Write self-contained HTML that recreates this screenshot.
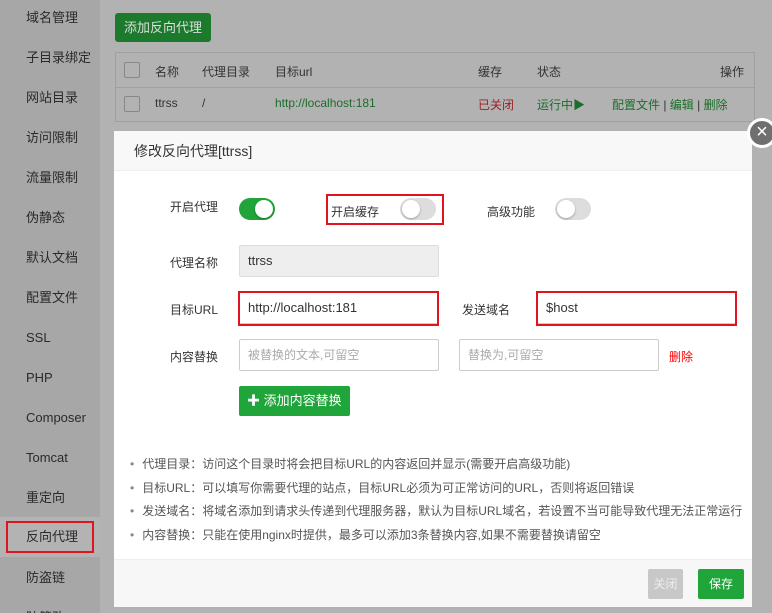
<!DOCTYPE html><html style="background:#b2b2b2"><head><meta charset="utf-8"><style>
*{box-sizing:border-box;margin:0;padding:0}
html,body{width:772px;height:613px;overflow:hidden}
body{background:#b2b2b2;font-family:"Liberation Sans","Noto Sans CJK SC",sans-serif;font-size:12px;color:#333;position:relative}
.sb{position:absolute;left:0;top:0;width:100px;height:613px;background:#a7a7a7}
.sb div{position:absolute;left:0;width:100px;height:40px;line-height:40px;padding-left:26px;font-size:13px;color:#2a2a2a}
.abs{position:absolute}
.g{color:#1b6e2a}
.modal{position:absolute;left:114px;top:131px;width:638px;height:476px;background:#fff}
.hd{height:40px;line-height:40px;padding-left:20px;font-size:14px;color:#333;border-bottom:1px solid #eee;background:#f8f8f8}
.ft{position:absolute;left:0;bottom:0;width:638px;height:48px;background:#f7f7f7;border-top:1px solid #eee}
.lbl{position:absolute;font-size:12px;color:#333}
.inp{position:absolute;height:32px;border:1px solid #ccc;border-radius:2px;line-height:30px;padding-left:8px;font-size:13px;color:#333;background:#fff}
.sw{position:absolute;width:36px;height:22px;border-radius:11px;background:#ddd}
.sw i{position:absolute;top:2px;width:18px;height:18px;border-radius:50%;background:#fff;box-shadow:0 1px 2px rgba(0,0,0,.3)}
.red{position:absolute;border:2px solid #e0141e}
.tips{position:absolute;left:16px;top:322px;color:#555;font-size:12px;line-height:23.5px}
.tips div:before{content:"•";color:#888;margin-right:8px}
</style></head><body>
<div class="sb">
<div style="top:-2px">域名管理</div><div style="top:38px">子目录绑定</div><div style="top:78px">网站目录</div><div style="top:118px">访问限制</div><div style="top:158px">流量限制</div><div style="top:198px">伪静态</div><div style="top:238px">默认文档</div><div style="top:278px">配置文件</div><div style="top:318px">SSL</div><div style="top:358px">PHP</div><div style="top:398px">Composer</div><div style="top:438px">Tomcat</div><div style="top:478px">重定向</div><div style="top:517px;background:#b3b3b3">反向代理</div><div style="top:558px">防盗链</div><div style="top:598px">防篡改</div>
</div>
<div class="red" style="left:6px;top:521px;width:88px;height:32px"></div>
<div class="abs" style="left:115px;top:13px;width:96px;height:29px;background:#1c7a2d;border-radius:3px;color:#ddd;font-size:13px;line-height:29px;text-align:center">添加反向代理</div>
<div class="abs" style="left:115px;top:52px;width:640px;height:70px;border:1px solid #a0a0a0"></div>
<div class="abs" style="left:116px;top:87px;width:638px;height:1px;background:#a0a0a0"></div>
<div class="abs" style="left:124px;top:62px;width:16px;height:16px;border:1px solid #888;border-radius:2px"></div>
<div class="abs" style="left:124px;top:96px;width:16px;height:16px;border:1px solid #888;border-radius:2px"></div>
<div class="abs" style="top:63px;left:155px;color:#333">名称</div>
<div class="abs" style="top:63px;left:202px;color:#333">代理目录</div>
<div class="abs" style="top:63px;left:275px;color:#333">目标url</div>
<div class="abs" style="top:63px;left:478px;color:#333">缓存</div>
<div class="abs" style="top:63px;left:537px;color:#333">状态</div>
<div class="abs" style="top:63px;left:720px;color:#333">操作</div>
<div class="abs" style="top:96px;left:155px;color:#333">ttrss</div>
<div class="abs" style="top:96px;left:202px;color:#333">/</div>
<div class="abs g" style="top:96px;left:275px">http://localhost:181</div>
<div class="abs" style="top:96px;left:478px;color:#9c1f1f">已关闭</div>
<div class="abs g" style="top:96px;left:537px">运行中▶</div>
<div class="abs g" style="top:96px;left:612px">配置文件 <span style="color:#333">|</span> 编辑 <span style="color:#333">|</span> 删除</div>
<div class="modal">
<div class="hd">修改反向代理[ttrss]</div>
<div class="lbl" style="left:56px;top:67px">开启代理</div>
<div class="sw" style="left:125px;top:67px;background:#20a53a"><i style="left:16px"></i></div>
<div class="lbl" style="left:217px;top:72px">开启缓存</div>
<div class="sw" style="left:286px;top:67px"><i style="left:2px"></i></div>
<div class="red" style="left:212px;top:63px;width:118px;height:31px"></div>
<div class="lbl" style="left:373px;top:72px">高级功能</div>
<div class="sw" style="left:441px;top:67px"><i style="left:2px"></i></div>
<div class="lbl" style="left:56px;top:123px">代理名称</div>
<div class="inp" style="left:125px;top:114px;width:200px;background:#eee;border-color:#ddd">ttrss</div>
<div class="lbl" style="left:56px;top:170px">目标URL</div>
<div class="inp" style="left:125px;top:161px;width:200px">http://localhost:181</div>
<div class="red" style="left:124px;top:160px;width:201px;height:35px"></div>
<div class="lbl" style="left:348px;top:170px">发送域名</div>
<div class="inp" style="left:423px;top:161px;width:200px">$host</div>
<div class="red" style="left:422px;top:160px;width:201px;height:35px"></div>
<div class="lbl" style="left:56px;top:217px">内容替换</div>
<div class="inp" style="left:125px;top:208px;width:200px;color:#aaa;font-size:12px">被替换的文本,可留空</div>
<div class="inp" style="left:345px;top:208px;width:200px;color:#aaa;font-size:12px">替换为,可留空</div>
<div class="lbl" style="left:555px;top:217px;color:#f00">删除</div>
<div class="abs" style="left:125px;top:255px;width:111px;height:30px;background:#20a53a;border-radius:2px;color:#fff;font-size:13px;line-height:30px;padding-left:8px"><b style="font-size:13px">✚</b> 添加内容替换</div>
<div class="tips"><div>代理目录：访问这个目录时将会把目标URL的内容返回并显示(需要开启高级功能)</div><div>目标URL：可以填写你需要代理的站点，目标URL必须为可正常访问的URL，否则将返回错误</div><div>发送域名：将域名添加到请求头传递到代理服务器，默认为目标URL域名，若设置不当可能导致代理无法正常运行</div><div>内容替换：只能在使用nginx时提供，最多可以添加3条替换内容,如果不需要替换请留空</div></div>
<div class="ft">
<div class="abs" style="left:534px;top:9px;width:35px;height:30px;background:#c8c8c8;color:#eee;border-radius:2px;text-align:center;line-height:30px">关闭</div>
<div class="abs" style="left:584px;top:9px;width:46px;height:30px;background:#20a53a;color:#fff;border-radius:2px;text-align:center;line-height:30px">保存</div>
</div>
</div>
<div class="abs" style="left:747px;top:118px;width:30px;height:30px;border-radius:50%;background:#6f6f6f;border:3px solid #fff;color:#fff;text-align:center;line-height:22px;font-size:20px">×</div>
</body></html>
